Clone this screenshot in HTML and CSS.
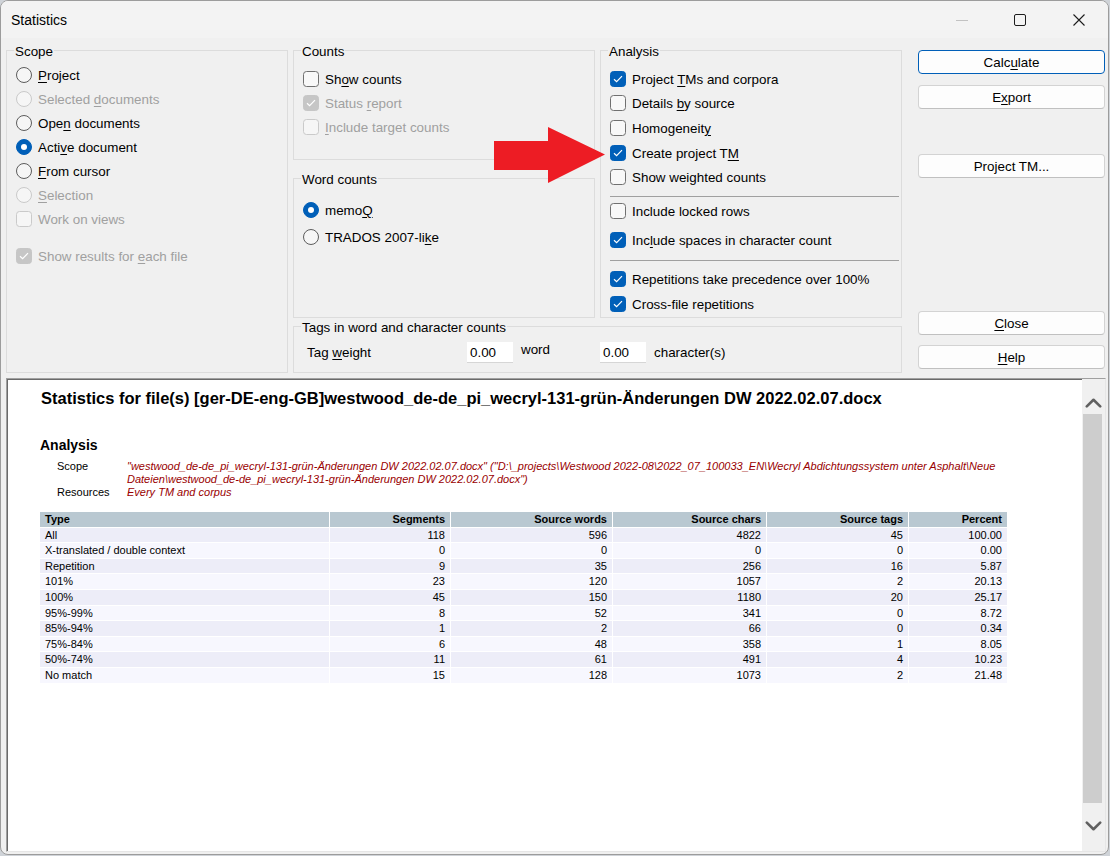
FILE: index.html
```html
<!DOCTYPE html>
<html>
<head>
<meta charset="utf-8">
<link rel="stylesheet" href="styles.css">
</head>
<body>
<div class="window">
  <div class="titlebar">
    <div class="title">Statistics</div>
    <div class="controls">
      <span class="ctl"><svg width="12" height="12" viewBox="0 0 12 12"><line x1="0" y1="6.5" x2="12" y2="6.5" stroke="#c2c2c2" stroke-width="1"/></svg></span>
      <span class="ctl"><svg width="12" height="12" viewBox="0 0 12 12"><rect x="0.5" y="0.5" width="11" height="11" rx="1.5" fill="none" stroke="#1c1c1c" stroke-width="1"/></svg></span>
      <span class="ctl"><svg width="12" height="12" viewBox="0 0 12 12"><path d="M0.5 0.5 L11.5 11.5 M11.5 0.5 L0.5 11.5" stroke="#1c1c1c" stroke-width="1.1"/></svg></span>
    </div>
  </div>

  <div class="top">
    <div class="group scope">
      <div class="legend">Scope</div>
      <div class="list first4">
        <div class="row"><span class="rd"></span><span><u>P</u>roject</span></div>
        <div class="row dis"><span class="rd dis"></span><span>Selected <u>d</u>ocuments</span></div>
        <div class="row"><span class="rd"></span><span>Ope<u>n</u> documents</span></div>
        <div class="row"><span class="rd on"></span><span>Acti<u>v</u>e document</span></div>
        <div class="row"><span class="rd"></span><span><u>F</u>rom cursor</span></div>
        <div class="row dis"><span class="rd dis"></span><span><u>S</u>election</span></div>
        <div class="row dis"><span class="cb dis"></span><span>Work on views</span></div>
        <div class="row dis gap13"><span class="cb dis on"><svg width="10" height="8" viewBox="0 0 10 8"><path d="M1 4.2 L3.6 6.6 L9 1.2" fill="none" stroke="#fff" stroke-width="1.2"/></svg></span><span>Show results for <u>e</u>ach file</span></div>
      </div>
    </div>

    <div class="mid">
      <div class="group counts">
        <div class="legend">Counts</div>
        <div class="list first8">
          <div class="row"><span class="cb"></span><span>Sh<u>o</u>w counts</span></div>
          <div class="row dis"><span class="cb dis on"><svg width="10" height="8" viewBox="0 0 10 8"><path d="M1 4.2 L3.6 6.6 L9 1.2" fill="none" stroke="#fff" stroke-width="1.2"/></svg></span><span>Status <u>r</u>eport</span></div>
          <div class="row dis"><span class="cb dis"></span><span><u>I</u>nclude target counts</span></div>
        </div>
      </div>
      <div class="group words">
        <div class="legend">Word counts</div>
        <div class="list first11">
          <div class="row"><span class="rd on"></span><span>memo<u>Q</u></span></div>
          <div class="row gap3"><span class="rd"></span><span>TRADOS 2007-li<u>k</u>e</span></div>
        </div>
      </div>
    </div>

    <div class="group analysis">
      <div class="legend">Analysis</div>
      <div class="list first8">
        <div class="row"><span class="cb on"><svg width="10" height="8" viewBox="0 0 10 8"><path d="M1 4.2 L3.6 6.6 L9 1.2" fill="none" stroke="#fff" stroke-width="1.2"/></svg></span><span>Project <u>T</u>Ms and corpora</span></div>
        <div class="row"><span class="cb"></span><span>Details <u>b</u>y source</span></div>
        <div class="row gap1"><span class="cb"></span><span>Homogeneit<u>y</u></span></div>
        <div class="row gap1"><span class="cb on"><svg width="10" height="8" viewBox="0 0 10 8"><path d="M1 4.2 L3.6 6.6 L9 1.2" fill="none" stroke="#fff" stroke-width="1.2"/></svg></span><span>Create project T<u>M</u></span></div>
        <div class="row"><span class="cb"></span><span>Show weighted counts</span></div>
        <div class="sep sep1"></div>
        <div class="row gap2"><span class="cb"></span><span>Include locked rows</span></div>
        <div class="row gap5"><span class="cb on"><svg width="10" height="8" viewBox="0 0 10 8"><path d="M1 4.2 L3.6 6.6 L9 1.2" fill="none" stroke="#fff" stroke-width="1.2"/></svg></span><span>Inc<u>l</u>ude spaces in character count</span></div>
        <div class="sep sep2"></div>
        <div class="row gap6"><span class="cb on"><svg width="10" height="8" viewBox="0 0 10 8"><path d="M1 4.2 L3.6 6.6 L9 1.2" fill="none" stroke="#fff" stroke-width="1.2"/></svg></span><span>Repetitions take precedence over 100%</span></div>
        <div class="row gap1"><span class="cb on"><svg width="10" height="8" viewBox="0 0 10 8"><path d="M1 4.2 L3.6 6.6 L9 1.2" fill="none" stroke="#fff" stroke-width="1.2"/></svg></span><span>Cross-file repetitions</span></div>
      </div>
    </div>

    <div class="group tags">
      <div class="legend">Tags in word and character counts</div>
      <div class="tag-row">
        <span class="tag-label">Tag <u>w</u>eight</span>
        <span class="input">0.00</span>
        <span class="unit-word">word</span>
        <span class="input">0.00</span>
        <span class="unit-char">character(s)</span>
      </div>
    </div>

    <div class="buttons">
      <div class="btn default">Calc<u>u</u>late</div>
      <div class="btn export">E<u>x</u>port</div>
      <div class="btn ptm">Project TM...</div>
      <div class="btn close"><u>C</u>lose</div>
      <div class="btn help"><u>H</u>elp</div>
    </div>
  </div>

  <div class="report">
    <div class="rc">
      <div class="rtitle">Statistics for file(s) [ger-DE-eng-GB]westwood_de-de_pi_wecryl-131-grün-Änderungen DW 2022.02.07.docx</div>
      <div class="rh">Analysis</div>
      <div class="meta">
        <div class="mlabel">Scope</div>
        <div class="mval">"westwood_de-de_pi_wecryl-131-grün-Änderungen DW 2022.02.07.docx" ("D:\_projects\Westwood 2022-08\2022_07_100033_EN\Wecryl Abdichtungssystem unter Asphalt\Neue<br>Dateien\westwood_de-de_pi_wecryl-131-grün-Änderungen DW 2022.02.07.docx")</div>
        <div class="mlabel">Resources</div>
        <div class="mval">Every TM and corpus</div>
      </div>
      <table class="stats">
        <colgroup>
          <col class="c1"><col class="c2"><col class="c3"><col class="c4"><col class="c5"><col class="c6">
        </colgroup>
        <thead>
          <tr><th class="l">Type</th><th>Segments</th><th>Source words</th><th>Source chars</th><th>Source tags</th><th>Percent</th></tr>
        </thead>
        <tbody>
          <tr><td class="l">All</td><td>118</td><td>596</td><td>4822</td><td>45</td><td>100.00</td></tr>
          <tr><td class="l">X-translated / double context</td><td>0</td><td>0</td><td>0</td><td>0</td><td>0.00</td></tr>
          <tr><td class="l">Repetition</td><td>9</td><td>35</td><td>256</td><td>16</td><td>5.87</td></tr>
          <tr><td class="l">101%</td><td>23</td><td>120</td><td>1057</td><td>2</td><td>20.13</td></tr>
          <tr><td class="l">100%</td><td>45</td><td>150</td><td>1180</td><td>20</td><td>25.17</td></tr>
          <tr><td class="l">95%-99%</td><td>8</td><td>52</td><td>341</td><td>0</td><td>8.72</td></tr>
          <tr><td class="l">85%-94%</td><td>1</td><td>2</td><td>66</td><td>0</td><td>0.34</td></tr>
          <tr><td class="l">75%-84%</td><td>6</td><td>48</td><td>358</td><td>1</td><td>8.05</td></tr>
          <tr><td class="l">50%-74%</td><td>11</td><td>61</td><td>491</td><td>4</td><td>10.23</td></tr>
          <tr><td class="l">No match</td><td>15</td><td>128</td><td>1073</td><td>2</td><td>21.48</td></tr>
        </tbody>
      </table>
    </div>
    <div class="sb">
      <div class="sb-up"><svg width="17" height="10" viewBox="0 0 17 10"><polyline points="1.8,8.4 8.5,1.8 15.2,8.4" fill="none" stroke="#606060" stroke-width="2.6" stroke-linecap="round" stroke-linejoin="round"/></svg></div>
      <div class="sb-thumb"></div>
      <div class="sb-down"><svg width="17" height="10" viewBox="0 0 17 10"><polyline points="1.8,1.6 8.5,8.2 15.2,1.6" fill="none" stroke="#606060" stroke-width="2.6" stroke-linecap="round" stroke-linejoin="round"/></svg></div>
    </div>
  </div>

  <svg class="arrow" width="112" height="57" viewBox="0 0 112 57"><polygon points="0,14 54,14 54,0 111,27.5 54,56 54,43 0,43" fill="#ed1c24"/></svg>
</div>
</body>
</html>
```

FILE: styles.css
```css
html, body {
  margin: 0;
  padding: 0;
}
body {
  background: #cfd3d8;
  width: 1110px;
  height: 856px;
  overflow: hidden;
}
.window {
  position: relative;
  width: 1109px;
  height: 855px;
  box-sizing: border-box;
  border: 1px solid #9c9c9c;
  border-radius: 8px;
  background: #f0f0f0;
  overflow: hidden;
  font-family: "Liberation Sans", Arial, sans-serif;
  font-size: 13.4px;
  color: #000;
}
u {
  text-decoration-thickness: 1px;
  text-underline-offset: 2px;
}

/* title bar */
.titlebar {
  height: 37px;
  display: flex;
  align-items: center;
  background: #f3f3f3;
}
.title {
  flex: 1;
  padding-left: 10px;
  font-size: 14px;
}
.controls {
  display: flex;
  height: 100%;
}
.ctl {
  width: 58.5px;
  display: flex;
  align-items: center;
  justify-content: center;
}

/* top area grid */
.top {
  display: grid;
  grid-template-columns: 282px 5px 302px 5px 302px 16px 187px;
  grid-template-rows: 268px 8px 47px;
  padding: 12px 0 0 5px;
}
.scope { grid-column: 1; grid-row: 1 / 4; }
.mid { grid-column: 3; grid-row: 1; display: flex; flex-direction: column; }
.analysis { grid-column: 5; grid-row: 1; }
.tags { grid-column: 3 / 6; grid-row: 3; }
.buttons { grid-column: 7; grid-row: 1 / 4; display: flex; flex-direction: column; }

.group {
  border: 1px solid #dcdcdc;
  box-sizing: border-box;
}
.counts { height: 110px; }
.words { margin-top: 18px; flex: 1; }
.legend {
  margin: -7px 0 0 7px;
  padding: 0 1px;
  width: max-content;
  height: 16px;
  line-height: 16px;
  background: #f0f0f0;
}
.list { padding-left: 9px; }
.first4 { margin-top: 3px; }
.first8 { margin-top: 7px; }
.first11 { margin-top: 10px; }
.row {
  display: flex;
  align-items: center;
  gap: 6px;
  height: 24px;
  white-space: nowrap;
}
.row.dis { color: #a0a0a0; }
.gap1 { margin-top: 1px; }
.gap2 { margin-top: 2px; }
.gap3 { margin-top: 3px; }
.gap5 { margin-top: 5px; }
.gap6 { margin-top: 6px; }
.gap13 { margin-top: 13px; }
.sep {
  height: 1px;
  background: #a0a0a0;
  margin-right: 2px;
}
.sep1 { margin-top: 7px; }
.sep2 { margin-top: 8px; }

/* checkbox */
.cb {
  flex: none;
  width: 16px;
  height: 16px;
  box-sizing: border-box;
  border: 1px solid #707070;
  border-radius: 3.5px;
  background: #f8f8f8;
  display: flex;
  align-items: center;
  justify-content: center;
}
.cb.on { background: #005fb8; border-color: #005fb8; }
.cb.dis { border-color: #cacaca; background: #f6f6f6; }
.cb.dis.on { background: #c6c6c6; border-color: #c6c6c6; }

/* radio */
.rd {
  flex: none;
  width: 16px;
  height: 16px;
  box-sizing: border-box;
  border: 1px solid #5c5c5c;
  border-radius: 50%;
  background: #f6f6f6;
  display: flex;
  align-items: center;
  justify-content: center;
}
.rd.dis { border-color: #cacaca; }
.rd.on { background: #005fb8; border-color: #005fb8; }
.rd.on::after {
  content: "";
  width: 6px;
  height: 6px;
  border-radius: 50%;
  background: #fff;
}

/* tags */
.tag-row {
  display: flex;
  align-items: center;
  height: 22px;
  margin-top: 5px;
  padding-left: 13px;
  white-space: nowrap;
}
.tag-label { width: 160px; }
.input {
  width: 46px;
  height: 21px;
  box-sizing: border-box;
  background: #fff;
  border-bottom: 1px solid #d6d6d6;
  padding-left: 3px;
  line-height: 21px;
}
.unit-word { width: 79px; margin: 0 0 5px 8px; }
.unit-char { margin-left: 8px; }

/* buttons */
.btn {
  height: 24px;
  box-sizing: border-box;
  border: 1px solid #d3d3d3;
  border-bottom-color: #c0c0c0;
  border-radius: 4px;
  background: #fdfdfd;
  display: flex;
  align-items: center;
  justify-content: center;
  white-space: nowrap;
}
.btn.default { border-color: #005fb8; }
.export { margin-top: 11px; }
.ptm { margin-top: 45px; }
.close { margin-top: auto; }
.help { margin-top: 10px; margin-bottom: 4px; }

/* report */
.report {
  margin: 5px 2px 2px 5px;
  height: 474px;
  box-sizing: border-box;
  border: 1px solid;
  border-color: #a0a0a0 #e6e6e6 #e6e6e6 #a0a0a0;
  box-shadow: inset 1px 1px 0 #6a6a6a;
  background: #fff;
  display: flex;
  font-family: "Liberation Sans", Arial, sans-serif;
}
.rc {
  flex: 1;
  padding: 9px 0 0 33px;
  overflow: hidden;
}
.rtitle {
  font-weight: bold;
  font-size: 16.5px;
  line-height: 20px;
  margin-left: 1px;
  white-space: nowrap;
}
.rh {
  font-weight: bold;
  font-size: 14px;
  line-height: 18px;
  margin-top: 28px;
}
.meta {
  display: grid;
  grid-template-columns: 70px 1fr;
  margin: 6px 0 0 17px;
  font-size: 11px;
  line-height: 13px;
}
.mval {
  font-style: italic;
  color: #990000;
  white-space: nowrap;
}
.stats {
  margin: 12px 0 0 -1px;
  table-layout: fixed;
  width: 969px;
  border-collapse: separate;
  border-spacing: 1px;
  font-size: 11px;
}
.c1 { width: 289px; }
.c2 { width: 120px; }
.c3 { width: 161px; }
.c4 { width: 153px; }
.c5 { width: 141px; }
.c6 { width: 98px; }
.stats th, .stats td {
  padding: 0 5px;
  height: 14.6px;
  line-height: 14.6px;
  text-align: right;
  white-space: nowrap;
  overflow: hidden;
}
.stats th {
  background: #b9c8d1;
  font-weight: bold;
}
.stats .l { text-align: left; }
.stats tbody tr:nth-child(odd) td { background: #ededf8; }
.stats tbody tr:nth-child(even) td { background: #f7f7fe; }

/* scrollbar */
.sb {
  width: 23px;
  background: #f0f0f0;
  display: flex;
  flex-direction: column;
}
.sb-up {
  height: 35px;
  box-sizing: border-box;
  display: flex;
  align-items: flex-end;
  justify-content: center;
  padding-bottom: 6px;
}
.sb-thumb {
  height: 389px;
  width: 19px;
  margin-left: 1px;
  background: #cdcdcd;
}
.sb-down {
  flex: 1;
  display: flex;
  align-items: flex-start;
  justify-content: center;
  padding-top: 18px;
}

/* annotation arrow */
.arrow {
  position: absolute;
  left: 493px;
  top: 126px;
}
```
